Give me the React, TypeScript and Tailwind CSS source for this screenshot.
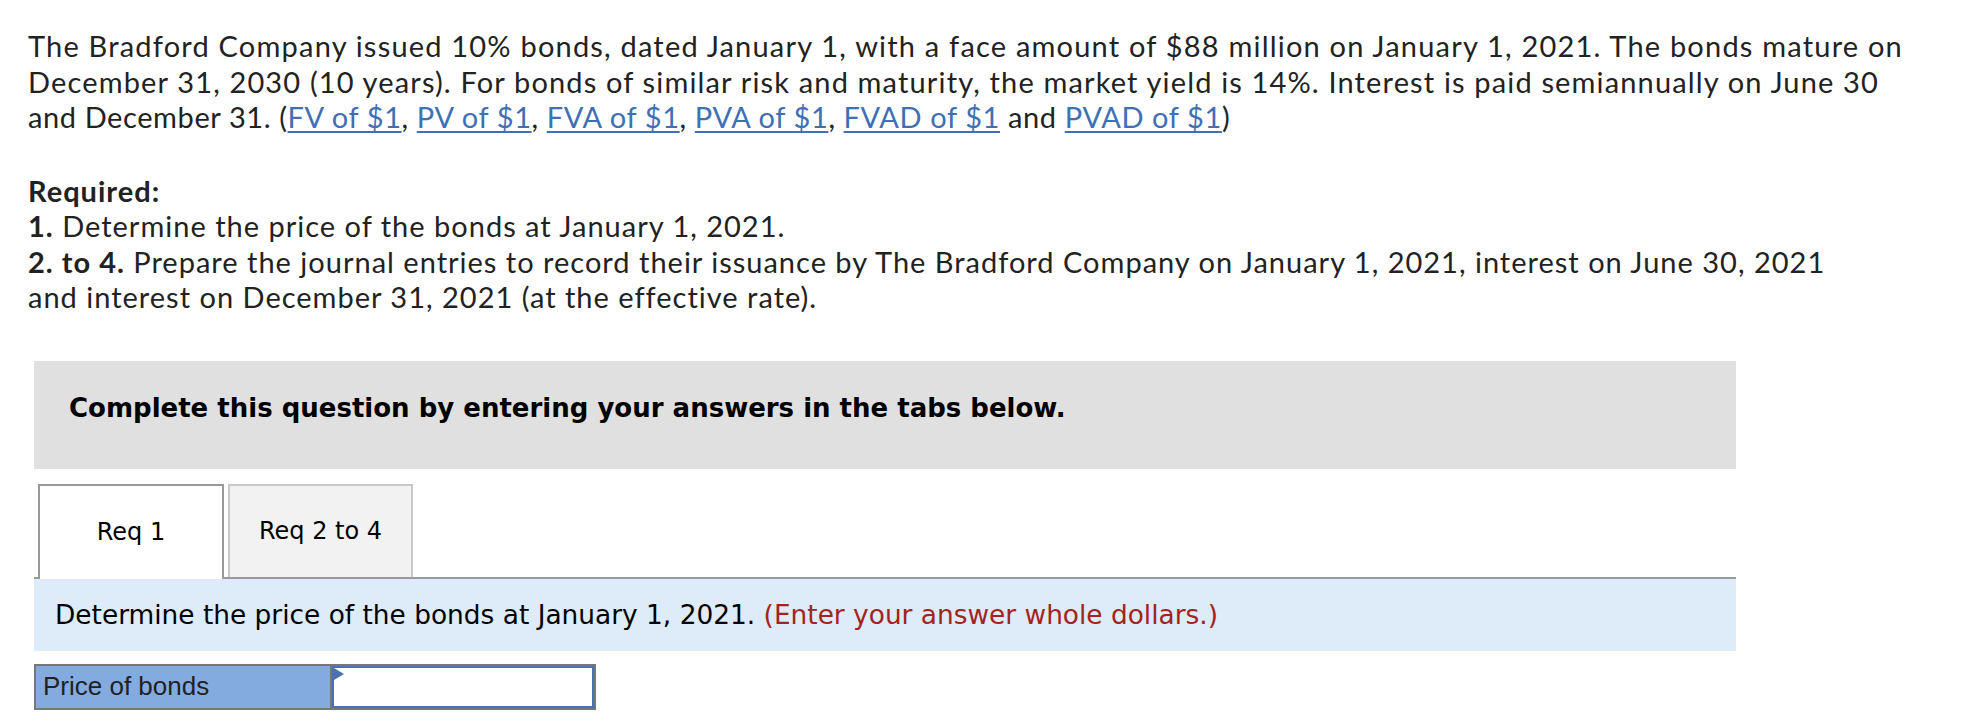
export default function App() {
  const link = "text-[#3f6fb5] underline underline-offset-[3px] decoration-[1.5px]";
  return (
    <div className="min-h-screen bg-white pl-[28px] pt-[28px] text-[#222]">
      <div className="w-[1918px] font-['Lato',sans-serif] text-[29px] leading-[35.5px] tracking-[1px]">
        <p>
          <span className="tracking-[1.2px]">
            The Bradford Company issued 10% bonds, dated January 1, with a face amount of $88 million on January 1,
            2021. The bonds mature on
          </span>
          <br />
          <span className="tracking-[1.15px]">
            December 31, 2030 (10 years). For bonds of similar risk and maturity, the market yield is 14%. Interest is
            paid semiannually on June 30
          </span>
          <br />
          <span className="tracking-[0.6px]">
            and December 31. (<a className={link}>FV of $1</a>, <a className={link}>PV of $1</a>,{" "}
            <a className={link}>FVA of $1</a>, <a className={link}>PVA of $1</a>, <a className={link}>FVAD of $1</a>{" "}
            and <a className={link}>PVAD of $1</a>)
          </span>
        </p>
        <div className="mt-[38px]">
          <p className="font-bold">Required:</p>
          <p>
            <span className="font-bold">1.</span> Determine the price of the bonds at January 1, 2021.
          </p>
          <p>
            <span className="font-bold">2. to 4.</span> Prepare the journal entries to record their issuance by The
            Bradford Company on January 1, 2021, interest on June 30, 2021
            <br />
            and interest on December 31, 2021 (at the effective rate).
          </p>
        </div>
      </div>

      <div className="ml-[6px] mt-[46px] flex h-[108px] w-[1702px] items-center bg-[#e0e0e0] pb-[12px] pl-[35px]">
        <span className="font-['DejaVu_Sans',sans-serif] text-[26px] font-bold text-black">
          Complete this question by entering your answers in the tabs below.
        </span>
      </div>

      <div className="ml-[6px] mt-[15px] flex w-[1702px] items-end gap-[4px] border-b-2 border-[#999] pl-[4px] font-['DejaVu_Sans',sans-serif] text-[24px] text-black">
        <div className="-mb-[2px] flex h-[95px] w-[186px] items-center justify-center border-2 border-b-0 border-[#999] bg-white">
          Req 1
        </div>
        <div className="flex h-[93px] w-[185px] items-center justify-center border-2 border-b-0 border-[#c8c8c8] bg-[#f2f2f2]">
          Req 2 to 4
        </div>
      </div>

      <div className="ml-[6px] flex h-[72px] w-[1702px] items-center bg-[#deebf8] pl-[21px] font-['DejaVu_Sans',sans-serif] text-[26.4px] text-black">
        <p>
          Determine the price of the bonds at January 1, 2021.{" "}
          <span className="text-[#a3241d]">(Enter your answer whole dollars.)</span>
        </p>
      </div>

      <div className="ml-[6px] mt-[13px] flex h-[46px] w-[562px] border-2 border-[#777]">
        <div className="flex w-[294px] items-center bg-[#84abe0] pl-[7px] font-['Liberation_Sans',sans-serif] text-[26px] text-[#222]">
          Price of bonds
        </div>
        <div className="flex-1 border-l-2 border-[#777]">
          <div className="relative h-full w-full border-2 border-[#4a72b2] bg-white">
            <svg className="absolute left-0 top-0" width="10" height="12" viewBox="0 0 10 12">
              <polygon points="0,0 10,6 0,12" fill="#4a72b2" />
            </svg>
            <input className="h-full w-full bg-transparent outline-none" />
          </div>
        </div>
      </div>
    </div>
  );
}
